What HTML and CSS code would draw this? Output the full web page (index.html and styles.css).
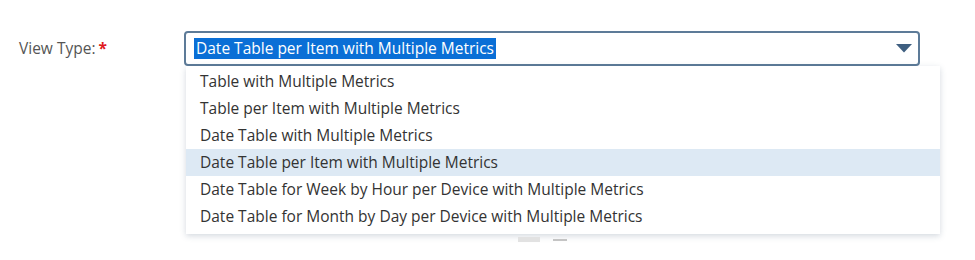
FILE: index.html
```html
<!DOCTYPE html>
<html>
<head>
<meta charset="utf-8">
<link rel="stylesheet" href="styles.css">
</head>
<body>
<div class="row">
  <label class="label">View Type:<span class="req">*</span></label>
  <div class="combo">
    <div class="select">
      <span class="value">Date Table per Item with Multiple Metrics</span>
      <svg class="caret" width="16" height="9" viewBox="0 0 16 9"><path d="M0 0 H16 L8 8.5 Z" fill="#3f5f80"/></svg>
    </div>
    <ul class="menu">
      <li>Table with Multiple Metrics</li>
      <li>Table per Item with Multiple Metrics</li>
      <li>Date Table with Multiple Metrics</li>
      <li class="active">Date Table per Item with Multiple Metrics</li>
      <li>Date Table for Week by Hour per Device with Multiple Metrics</li>
      <li>Date Table for Month by Day per Device with Multiple Metrics</li>
    </ul>
    <div class="behind">
      <span class="bar"></span>
      <span class="arrow"></span>
    </div>
  </div>
</div>
</body>
</html>
```
FILE: styles.css
```css
html, body {
  margin: 0;
  padding: 0;
  background: #fff;
  font-family: "Open Sans", "Noto Sans", sans-serif;
  font-size: 15.5px;
  color: #333;
}
body {
  min-height: 260px;
}
.row {
  display: flex;
  align-items: flex-start;
  padding: 31px 0 0 19px;
}
.label {
  width: 165px;
  color: #555;
  line-height: 34px;
}
.req {
  color: #e0191e;
  margin-left: 3px;
  font-weight: bold;
}
.combo {
  display: flex;
  flex-direction: column;
  width: 736px;
}
.select {
  box-sizing: border-box;
  height: 35px;
  border: 2px solid #5d7b98;
  border-radius: 4px;
  display: flex;
  align-items: center;
  justify-content: space-between;
  padding: 0 6px 0 8px;
}
.value {
  background: #0a6fd6;
  color: #fff;
  line-height: 21px;
  padding: 0 2px;
}
.caret {
  display: block;
}
.menu {
  width: 754px;
  box-sizing: border-box;
  margin: 0 0 0 2px;
  padding: 2px 0 4px;
  list-style: none;
  background: #fff;
  box-shadow: 0 2px 6px rgba(60, 80, 110, 0.22);
}
.menu li {
  height: 27px;
  line-height: 27px;
  padding-left: 14px;
  color: #333;
  white-space: nowrap;
}
.menu li.active {
  background: #dde9f4;
}
.behind {
  display: flex;
  align-items: center;
  gap: 13px;
  margin: 3px 0 0 334px;
}
.bar {
  width: 22px;
  height: 5px;
  background: #e2e2e2;
}
.arrow {
  width: 14px;
  height: 2px;
  background: #c4c4c4;
}
```
